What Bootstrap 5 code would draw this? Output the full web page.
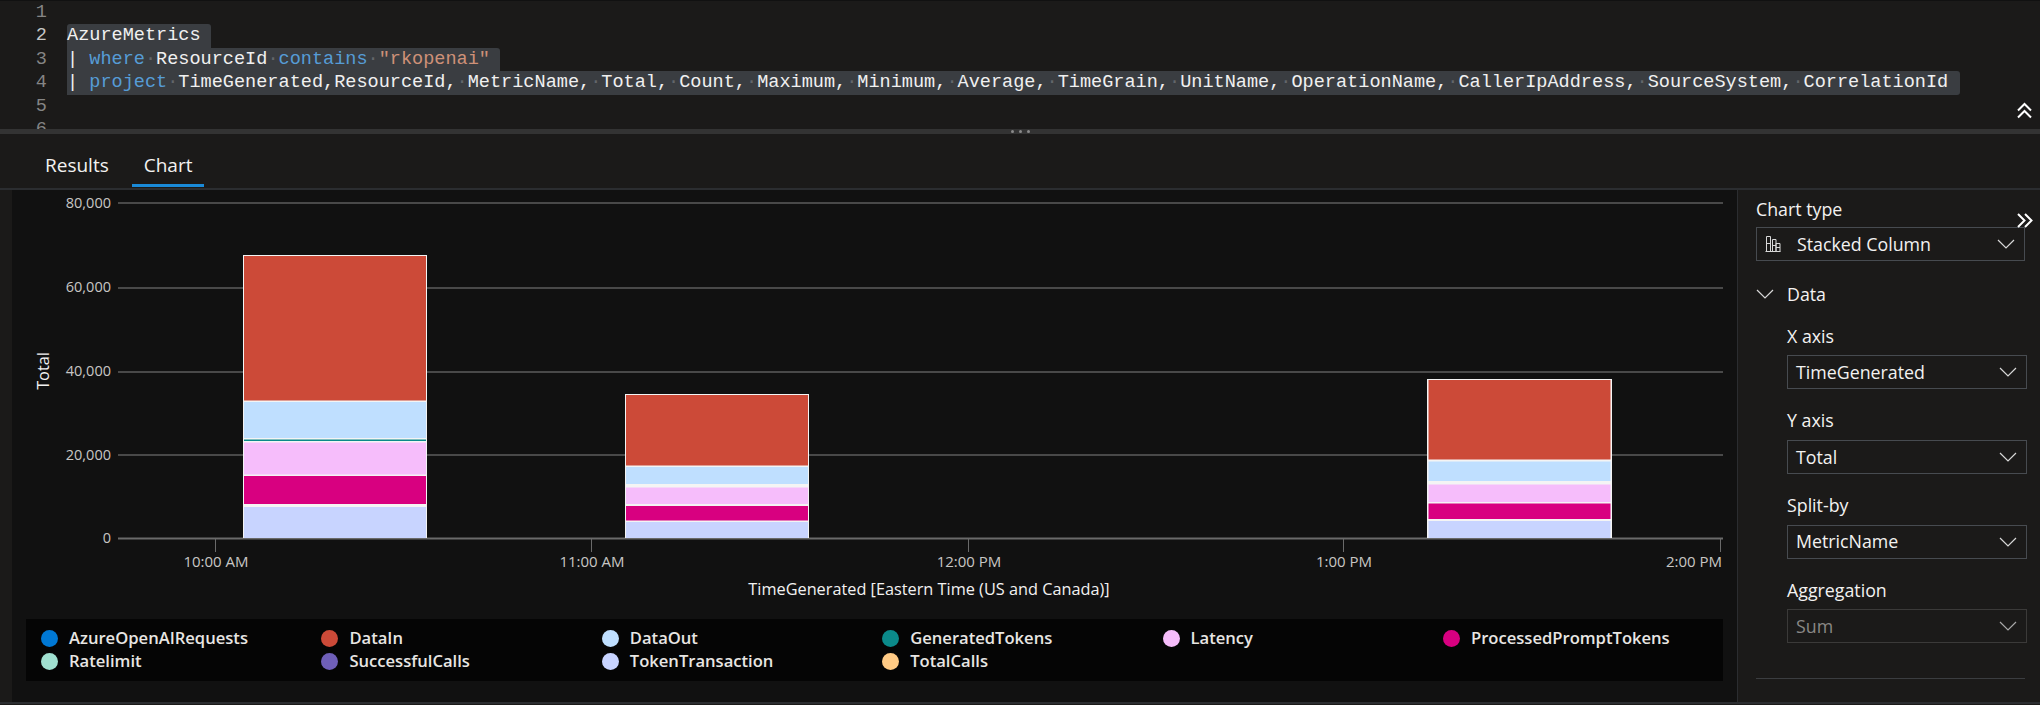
<!DOCTYPE html>
<html lang="en">
<head>
    <meta charset="UTF-8">
    <meta name="viewport" content="width=device-width, initial-scale=1.0">
    <title>AzureMetrics query - Chart</title>
    <link href="https://cdn.jsdelivr.net/npm/bootstrap@5.3.0/dist/css/bootstrap.min.css" rel="stylesheet">
    <style>
        html, body { height: 705px; overflow: hidden; }
        body { background: #1b1a19; color: #f3f2f1; font-family: "Open Sans", "Noto Sans", sans-serif; font-size: 17.8px; }

        /* query editor */
        .editor { height: 129px; overflow: hidden; background: #1b1a19; border-top: 1px solid #111; }
        .code-line { height: 23.4px; line-height: 23.4px; font-family: "Liberation Mono", monospace; font-size: 18.56px; white-space: pre; }
        .line-no { width: 67px; padding-right: 20px; text-align: right; color: #858585; flex: none; }
        .line-no.current { color: #c6c6c6; }
        .sel { background: #3a3d41; padding-right: 10px; color: #f0f0f0; }
        .sel-first { border-radius: 3px 3px 0 0; }
        .sel-mid { border-radius: 0 3px 0 0; }
        .sel-last { border-radius: 0 3px 3px 0; padding-right: 12px; }
        .ws { color: #62666b; }
        .kw { color: #569cd6; }
        .str { color: #ce9178; }

        .splitter { height: 5px; background: #333; gap: 5px; }
        .splitter i { width: 3px; height: 3px; background: #8a8a8a; border-radius: 50%; }

        /* tabs */
        .tab-strip { height: 54px; padding-left: 33px; }
        .tab-item { display: flex; align-items: center; height: 53px; padding: 12px 12px 0; font-size: 19px; border-bottom: 3px solid transparent; }
        .tab-item.current { border-bottom-color: #1a8ad8; margin-left: 11px; }

        /* chart area */
        .workarea { height: 516px; border-top: 2px solid #2b2d30; border-bottom: 2px solid #2b2d30; }
        .chart-panel { width: 1726px; margin-left: 12px; background: #111; flex: none; border-right: 1px solid #2b2d30; }
        .chart-panel svg { display: block; }
        .chart-panel text { font-family: "Open Sans", "Noto Sans", sans-serif; fill: #c8c6c4; font-size: 14.5px; }
        .chart-panel text.tick-x { font-size: 15px; }
        .chart-panel text.axis-title { fill: #f3f2f1; font-size: 16.3px; }
        .legend-box { width: 1697px; height: 62px; margin-left: 14px; background: #050505; padding: 8px 0 0 15px; display: grid; grid-template-columns: repeat(6, 280.4px); grid-auto-rows: 23px; }
        .legend-entry { display: flex; align-items: center; gap: 11px; font-weight: 600; font-size: 16.6px; color: #e8e6e3; }
        .legend-dot { width: 17px; height: 17px; border-radius: 50%; flex: none; }

        /* settings */
        .side-panel { width: 302px; padding: 7px 15px 0 18px; position: relative; }
        .field-label { font-size: 17.8px; line-height: 24px; }
        .chart-type-label { margin-bottom: 6px; }
        .picker { display: flex; align-items: center; justify-content: space-between; width: 100%; height: 34px; padding: 0 9px 0 8px; background: transparent; color: #f3f2f1; border: 1px solid #474b50; border-radius: 0; font-size: 17.8px; text-align: left; }
        .picker.disabled-field { color: #8a8886; border-color: #3b3a39; }
        .picker svg { flex: none; }
        .data-group { padding-left: 31px; margin-right: -2px; }
        .data-group .field-label { margin-top: 19px; margin-bottom: 7.7px; }
        .data-group .field-label:first-child { margin-top: 17.5px; }
        .data-head { height: 24px; margin-top: 21px; gap: 13px; }
        .side-rule { border-top: 1px solid #3b3d40; margin-top: 35px; }
        .fold-btn { position: absolute; right: 7px; color: #fff; }
    </style>
</head>
<body>
    <!-- Query editor -->
    <div class="editor position-relative">
        <div class="d-flex code-line"><span class="line-no">1</span></div>
        <div class="d-flex code-line"><span class="line-no current">2</span><span class="sel sel-first">AzureMetrics</span></div>
        <div class="d-flex code-line"><span class="line-no">3</span><span class="sel sel-mid">| <span class="kw">where</span><span class="ws">·</span>ResourceId<span class="ws">·</span><span class="kw">contains</span><span class="ws">·</span><span class="str">"rkopenai"</span></span></div>
        <div class="d-flex code-line"><span class="line-no">4</span><span class="sel sel-last">| <span class="kw">project</span><span class="ws">·</span>TimeGenerated,ResourceId,<span class="ws">·</span>MetricName,<span class="ws">·</span>Total,<span class="ws">·</span>Count,<span class="ws">·</span>Maximum,<span class="ws">·</span>Minimum,<span class="ws">·</span>Average,<span class="ws">·</span>TimeGrain,<span class="ws">·</span>UnitName,<span class="ws">·</span>OperationName,<span class="ws">·</span>CallerIpAddress,<span class="ws">·</span>SourceSystem,<span class="ws">·</span>CorrelationId</span></div>
        <div class="d-flex code-line"><span class="line-no">5</span></div>
        <div class="d-flex code-line"><span class="line-no">6</span></div>
        <svg class="fold-btn" style="top:101px" width="17" height="17" viewBox="0 0 17 17" fill="none" stroke="currentColor" stroke-width="2"><path d="M2 8.500 8.500 2l6.500 6.500M2 15.500 8.500 9l6.500 6.500"/></svg>
    </div>
    <div class="splitter d-flex align-items-center justify-content-center"><i></i><i></i><i></i></div>

    <!-- Tabs -->
    <div class="tab-strip d-flex align-items-start">
        <div class="tab-item">Results</div>
        <div class="tab-item current">Chart</div>
    </div>

    <div class="workarea d-flex">
        <div class="chart-panel">
            <svg width="1725" height="429" viewBox="12 190 1725 429">
                <!-- grid -->
                <g stroke="#5c5c5c" stroke-width="1.500">
                    <line x1="118" x2="1723" y1="203" y2="203"/>
                    <line x1="118" x2="1723" y1="288" y2="288"/>
                    <line x1="118" x2="1723" y1="372" y2="372"/>
                    <line x1="118" x2="1723" y1="455" y2="455"/>
                </g>
                <line x1="118" x2="1723" y1="538.500" y2="538.500" stroke="#6a6a6a" stroke-width="2"/>
                <g stroke="#6a6a6a">
                    <line x1="215.500" x2="215.500" y1="539" y2="552"/>
                    <line x1="591.500" x2="591.500" y1="539" y2="552"/>
                    <line x1="968.500" x2="968.500" y1="539" y2="552"/>
                    <line x1="1343.500" x2="1343.500" y1="539" y2="552"/>
                    <line x1="1720.500" x2="1720.500" y1="539" y2="552"/>
                </g>
                <g text-anchor="end">
                    <text x="111" y="208">80,000</text>
                    <text x="111" y="292">60,000</text>
                    <text x="111" y="376">40,000</text>
                    <text x="111" y="460">20,000</text>
                    <text x="111" y="543">0</text>
                </g>
                <g text-anchor="middle">
                    <text class="tick-x" x="216" y="567">10:00 AM</text>
                    <text class="tick-x" x="592" y="567">11:00 AM</text>
                    <text class="tick-x" x="969" y="567">12:00 PM</text>
                    <text class="tick-x" x="1344" y="567">1:00 PM</text>
                    <text class="tick-x" x="1694" y="567">2:00 PM</text>
                    <text class="axis-title" x="929" y="595">TimeGenerated [Eastern Time (US and Canada)]</text>
                    <text class="axis-title" transform="translate(49 371) rotate(-90)">Total</text>
                </g>
                <!-- 10:00 bar -->
                <rect x="243" y="255" width="184" height="283" fill="#f4f4f4"/>
                <rect x="244" y="256" width="182" height="144.500" fill="#cc4a38"/>
                <rect x="244" y="402" width="182" height="36" fill="#bfdfff"/>
                <rect x="244" y="439.500" width="182" height="1.500" fill="#0b8a8a"/>
                <rect x="244" y="442.500" width="182" height="32" fill="#f6bdfb"/>
                <rect x="244" y="476" width="182" height="28" fill="#d80080"/>
                <rect x="244" y="507" width="182" height="31" fill="#c8d4ff"/>
                <!-- 11:00 bar -->
                <rect x="625" y="394" width="184" height="144" fill="#f4f4f4"/>
                <rect x="626" y="395" width="182" height="70.500" fill="#cc4a38"/>
                <rect x="626" y="467" width="182" height="17" fill="#bfdfff"/>
                <rect x="626" y="487.500" width="182" height="16.500" fill="#f6bdfb"/>
                <rect x="626" y="506" width="182" height="14.500" fill="#d80080"/>
                <rect x="626" y="522" width="182" height="16" fill="#c8d4ff"/>
                <!-- 1:00 bar -->
                <rect x="1427" y="379" width="185" height="159" fill="#f4f4f4"/>
                <rect x="1428.500" y="380" width="182" height="79.500" fill="#cc4a38"/>
                <rect x="1428.500" y="461.500" width="182" height="19.500" fill="#bfdfff"/>
                <rect x="1428.500" y="484.500" width="182" height="17.500" fill="#f6bdfb"/>
                <rect x="1428.500" y="503.500" width="182" height="15.500" fill="#d80080"/>
                <rect x="1428.500" y="521" width="182" height="17" fill="#c8d4ff"/>
            </svg>
            <div class="legend-box">
                <div class="legend-entry"><span class="legend-dot" style="background:#0078d4"></span>AzureOpenAIRequests</div>
                <div class="legend-entry"><span class="legend-dot" style="background:#cc4a38"></span>DataIn</div>
                <div class="legend-entry"><span class="legend-dot" style="background:#bfdfff"></span>DataOut</div>
                <div class="legend-entry"><span class="legend-dot" style="background:#0b8a8a"></span>GeneratedTokens</div>
                <div class="legend-entry"><span class="legend-dot" style="background:#f6bdfb"></span>Latency</div>
                <div class="legend-entry"><span class="legend-dot" style="background:#d80080"></span>ProcessedPromptTokens</div>
                <div class="legend-entry"><span class="legend-dot" style="background:#a0e0d0"></span>Ratelimit</div>
                <div class="legend-entry"><span class="legend-dot" style="background:#6f5fb8"></span>SuccessfulCalls</div>
                <div class="legend-entry"><span class="legend-dot" style="background:#c8d4ff"></span>TokenTransaction</div>
                <div class="legend-entry"><span class="legend-dot" style="background:#ffcb85"></span>TotalCalls</div>
            </div>
        </div>

        <!-- Chart settings -->
        <div class="side-panel">
            <svg class="fold-btn" style="top:22px" width="17" height="17" viewBox="0 0 17 17" fill="none" stroke="currentColor" stroke-width="2"><path d="M2 2l6.500 6.500L2 15M9 2l6.500 6.500L9 15"/></svg>
            <div class="field-label chart-type-label">Chart type</div>
            <button class="picker" type="button">
                <span class="d-flex align-items-center gap-3">
                    <svg width="16" height="16" viewBox="0 0 16 16" fill="none" stroke="#d8d8d8"><path d="M.5 15.500h15M1.500 15.500V.5h4v15M7.500 15.500V3.500h3.500v12M11 15.500V7.500h4v8M7.500 9.500H11M11 11.500h4M1.500 7.500h4"/></svg>
                    Stacked Column
                </span>
                <svg width="18" height="10" viewBox="0 0 18 10" fill="none" stroke="#d8d8d8" stroke-width="1.200"><path d="M1 1l8 8 8-8"/></svg>
            </button>
            <div class="data-head d-flex align-items-center">
                <svg width="18" height="10" viewBox="0 0 18 10" fill="none" stroke="#d8d8d8" stroke-width="1.200"><path d="M1 1l8 8 8-8"/></svg>
                <span class="field-label">Data</span>
            </div>
            <div class="data-group">
                <div class="field-label">X axis</div>
                <button class="picker" type="button">TimeGenerated
                    <svg width="18" height="10" viewBox="0 0 18 10" fill="none" stroke="#d8d8d8" stroke-width="1.200"><path d="M1 1l8 8 8-8"/></svg></button>
                <div class="field-label">Y axis</div>
                <button class="picker" type="button">Total
                    <svg width="18" height="10" viewBox="0 0 18 10" fill="none" stroke="#d8d8d8" stroke-width="1.200"><path d="M1 1l8 8 8-8"/></svg></button>
                <div class="field-label">Split-by</div>
                <button class="picker" type="button">MetricName
                    <svg width="18" height="10" viewBox="0 0 18 10" fill="none" stroke="#d8d8d8" stroke-width="1.200"><path d="M1 1l8 8 8-8"/></svg></button>
                <div class="field-label">Aggregation</div>
                <button class="picker disabled-field" type="button">Sum
                    <svg width="18" height="10" viewBox="0 0 18 10" fill="none" stroke="#a8a8a8" stroke-width="1.200"><path d="M1 1l8 8 8-8"/></svg></button>
            </div>
            <div class="side-rule"></div>
        </div>
    </div>

    <script src="https://cdn.jsdelivr.net/npm/bootstrap@5.3.0/dist/js/bootstrap.bundle.min.js"></script>
</body>
</html>
